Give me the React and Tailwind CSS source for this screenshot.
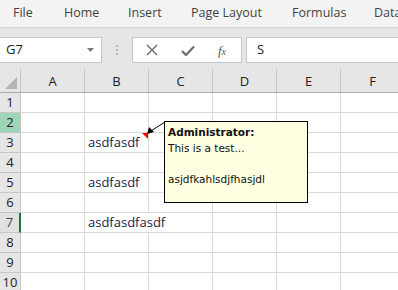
export default function App() {
  const cols = ['A', 'B', 'C', 'D', 'E', 'F'];
  const rows = [1, 2, 3, 4, 5, 6, 7, 8, 9, 10];
  const data = { 3: 'asdfasdf', 5: 'asdfasdf', 7: 'asdfasdfasdf' };

  return (
    <div className="relative w-[398px] h-[290px] overflow-hidden bg-white font-['Open_Sans',sans-serif]">
      {/* Menu bar */}
      <div className="h-[28px] bg-[#f3f3f3] border-b border-[#d5d5d5] flex items-center pl-[13px] text-[12.5px] text-[#444] whitespace-nowrap overflow-hidden">
        <span className="w-[51px] shrink-0">File</span>
        <span className="w-[64px] shrink-0">Home</span>
        <span className="w-[63px] shrink-0">Insert</span>
        <span className="w-[101px] shrink-0">Page Layout</span>
        <span className="w-[82px] shrink-0">Formulas</span>
        <span className="shrink-0">Data</span>
      </div>

      {/* Formula bar */}
      <div className="h-[41px] bg-[#e6e6e6] flex items-start pt-[9px]">
        <div className="w-[102px] h-[26px] bg-white border border-l-0 border-[#c6c6c6] flex items-center justify-between pl-[6px] pr-[7px] text-[13px] text-[#222]">
          <span>G7</span>
          <svg width="7" height="4" viewBox="0 0 7 4">
            <polygon points="0,0 7,0 3.5,4" fill="#7a7a7a" />
          </svg>
        </div>
        <div className="w-[30px] h-[26px] flex flex-col items-center justify-center gap-[2px]">
          <span className="w-[2px] h-[2px] bg-[#b5b5b5]" />
          <span className="w-[2px] h-[2px] bg-[#b5b5b5]" />
          <span className="w-[2px] h-[2px] bg-[#b5b5b5]" />
        </div>
        <div className="w-[110px] h-[26px] bg-white border border-[#c6c6c6] flex items-center">
          <div className="w-[37px] flex justify-center">
            <svg width="12" height="12" viewBox="0 0 12 12">
              <path d="M1 1 L11 11 M11 1 L1 11" stroke="#6b6b6b" strokeWidth="1.4" fill="none" />
            </svg>
          </div>
          <div className="w-[36px] flex justify-center">
            <svg width="14" height="11" viewBox="0 0 14 11">
              <path d="M1 6 L5 10 L13 1.5" stroke="#6b6b6b" strokeWidth="2.2" fill="none" />
            </svg>
          </div>
          <div className="flex-1 flex justify-center pr-[3px] font-['Liberation_Serif',serif] italic text-[13px] text-[#555] leading-none">
            <span>f<span className="text-[10px]">x</span></span>
          </div>
        </div>
        <div className="flex-1 ml-[4px] h-[26px] bg-white border border-r-0 border-[#c6c6c6] flex items-center pl-[10px] text-[13px] text-[#222]">
          S
        </div>
      </div>

      {/* Column headers */}
      <div className="flex h-[24px] bg-[#e6e6e6] border-b border-[#ababab]">
        <div className="w-[21px] shrink-0 border-r border-[#c6c6c6] relative">
          <svg className="absolute right-[3px] bottom-[3px]" width="12" height="12" viewBox="0 0 12 12">
            <polygon points="12,0 12,12 0,12" fill="#b4b4b4" />
          </svg>
        </div>
        {cols.map((c) => (
          <div
            key={c}
            className="w-[64px] shrink-0 border-r border-[#c6c6c6] flex items-center justify-center text-[13px] text-[#222] pt-[2px]"
          >
            {c}
          </div>
        ))}
      </div>

      {/* Rows */}
      {rows.map((r) => (
        <div key={r} className="flex h-[20px]">
          <div
            className={
              r === 2
                ? 'w-[21px] shrink-0 bg-[#9fd5b7] border-r border-b border-[#c6c6c6] flex items-center justify-center text-[13px] text-[#222]'
                : r === 7
                ? 'w-[21px] shrink-0 bg-[#e1e1e1] border-r-2 border-r-[#217346] border-b border-b-[#c6c6c6] flex items-center justify-center text-[13px] text-[#444]'
                : 'w-[21px] shrink-0 bg-[#e6e6e6] border-r border-b border-[#c6c6c6] flex items-center justify-center text-[13px] text-[#222]'
            }
          >
            {r}
          </div>
          {cols.map((c) => {
            const txt = c === 'B' ? data[r] : undefined;
            const noRight = c === 'B' && r === 7;
            return (
              <div
                key={c}
                className={
                  noRight
                    ? 'w-[64px] shrink-0 border-b border-[#dadada] relative'
                    : 'w-[64px] shrink-0 border-r border-b border-[#dadada] relative'
                }
              >
                {txt && (
                  <span className="absolute left-[3px] bottom-[1px] text-[13px] leading-[18px] text-[#1c1c4c] whitespace-nowrap">
                    {txt}
                  </span>
                )}
              </div>
            );
          })}
        </div>
      ))}

      {/* Comment indicator and arrow */}
      <svg className="absolute inset-0 pointer-events-none" width="398" height="290">
        <polygon points="142,133 148,133 148,139" fill="#ff0000" />
        <line x1="165" y1="122" x2="151" y2="131" stroke="#000" strokeWidth="1" />
        <polygon points="147,134 149,127 154,132" fill="#000" />
      </svg>

      {/* Comment box */}
      <div className="absolute left-[164px] top-[121px] w-[144px] h-[82px] border border-black bg-[#ffffe1] pl-[3px] pt-[3px] font-['DejaVu_Sans',sans-serif] text-[10.5px] leading-[15.5px] text-[#111]">
        <div className="font-bold">Administrator:</div>
        <div>This is a test...</div>
        <div>&nbsp;</div>
        <div>asjdfkahlsdjfhasjdl</div>
      </div>
    </div>
  );
}
